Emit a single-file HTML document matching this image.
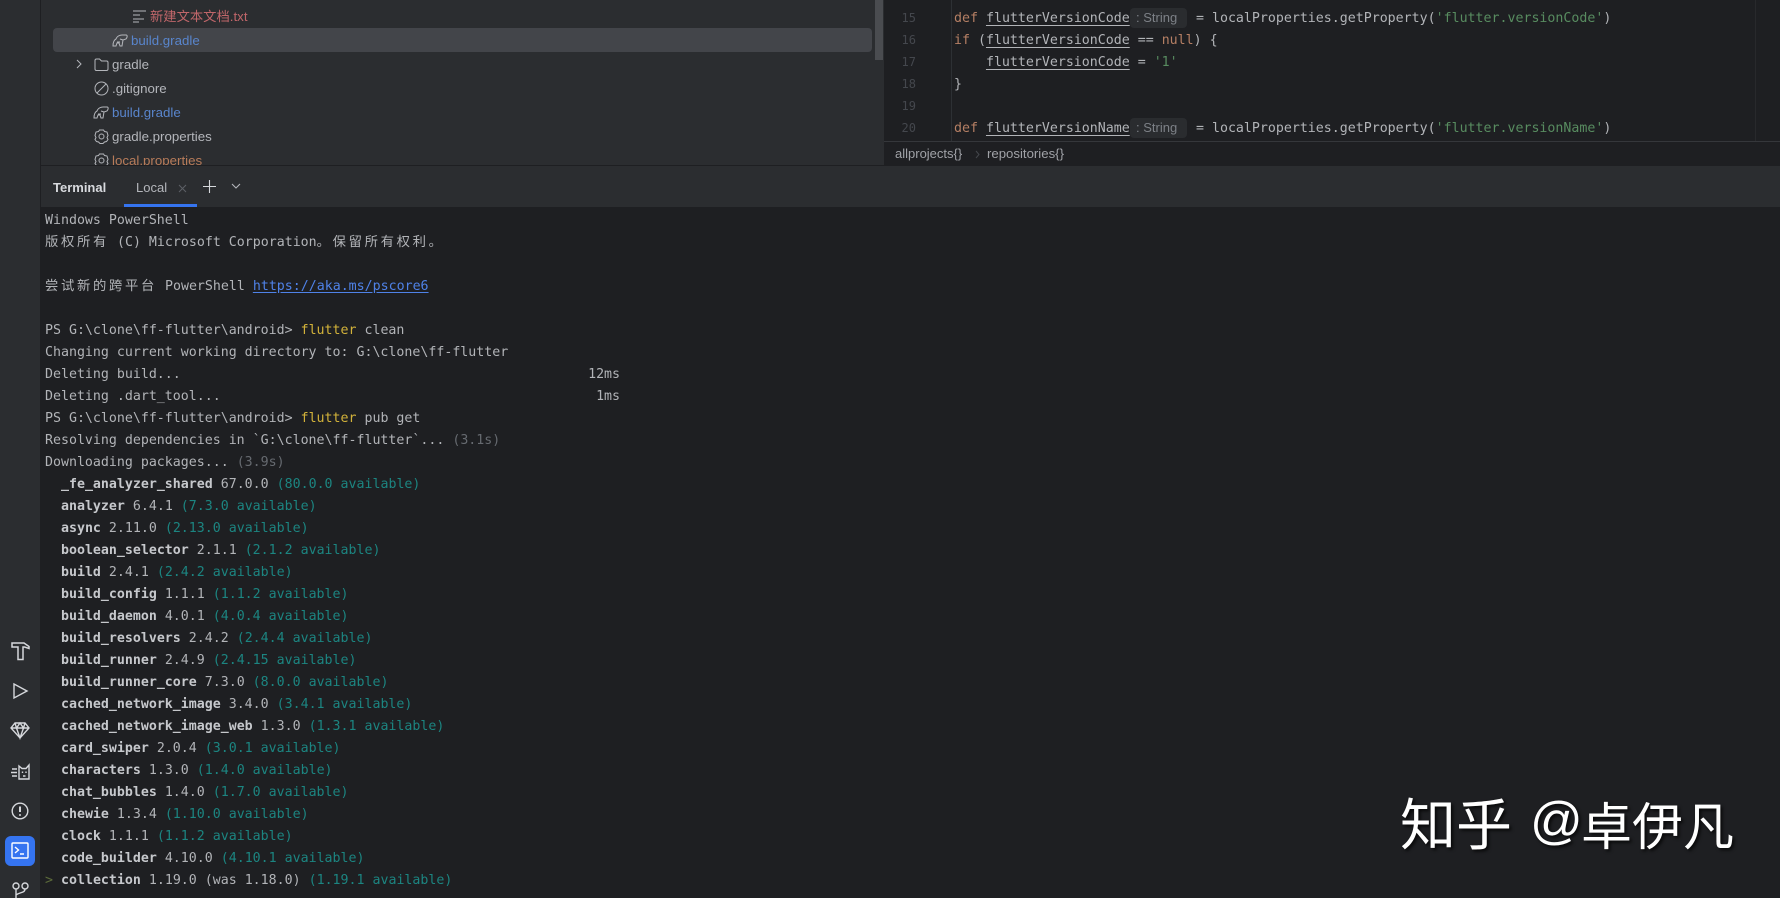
<!DOCTYPE html>
<html><head><meta charset="utf-8"><style>
html,body{margin:0;padding:0;background:#1e1f22;}
#p{position:relative;width:1780px;height:898px;overflow:hidden;background:#1e1f22;}
.a{position:absolute;}
.t{position:absolute;font:13.3px/24px "Liberation Sans","Noto Sans CJK SC",sans-serif;white-space:pre;color:#b4b6bb;}
.m{position:absolute;left:45px;height:22px;font:13.28px/22px "DejaVu Sans Mono","Noto Sans CJK SC",monospace;white-space:pre;color:#b2b4b8;transform:translateY(2px);}
.m.j{transform:none;}
.m b{font-weight:700;color:#c6c8cc;}
.c{font-family:"Noto Sans CJK SC",sans-serif;font-size:13.33px;letter-spacing:2.67px;}
.g{color:#1c8581;}.y{color:#d2b23a;}.d{color:#666a70;}
.l{color:#4f82e8;text-decoration:underline;text-underline-offset:2px;}
.e{position:absolute;left:954px;height:22px;font:13.28px/22px "DejaVu Sans Mono",monospace;white-space:pre;color:#b2b4b8;transform:translateY(1px);}
.n{position:absolute;left:896px;width:20px;text-align:right;font:12px/22px "DejaVu Sans Mono",monospace;color:#44474d;}
.k{color:#b57f64;}.s{color:#588c60;}
.u{text-decoration:underline;text-underline-offset:3px;}
.h{position:absolute;left:1130px;width:57px;height:20px;background:#2a2c2f;border-radius:4px;font:13px/20px "Liberation Sans",sans-serif;color:#7d8187;text-indent:6px;white-space:pre;}
svg{position:absolute;overflow:visible;fill:none;stroke:#b4b6bb;}
.b svg,svg.b{stroke:#d6d8dc;}
.w{position:absolute;color:#fff;font-family:"Noto Sans CJK SC",sans-serif;text-shadow:2px 2px 3px rgba(0,0,0,.75);white-space:pre;}
</style></head><body><div id="p">

<!-- top panes -->
<div class="a" style="left:0;top:0;width:884px;height:166px;background:#2b2d30;"></div>
<div class="a" style="left:53px;top:28px;width:819px;height:24px;background:#43454a;border-radius:4px;"></div>
<div class="a" style="left:875px;top:0;width:8px;height:60px;background:#4a4c50;"></div>
<div class="t" style="left:150px;top:5px;color:#c0666a;">新建文本文档.txt</div>
<div class="t" style="left:131px;top:29px;color:#5985cc;">build.gradle</div>
<div class="t" style="left:112px;top:53px;">gradle</div>
<div class="t" style="left:112px;top:77px;">.gitignore</div>
<div class="t" style="left:112px;top:101px;color:#5985cc;">build.gradle</div>
<div class="t" style="left:112px;top:125px;">gradle.properties</div>
<div class="a" style="left:40px;top:149px;width:840px;height:16px;overflow:hidden;"><div class="t" style="left:72px;top:0;color:#b87c5a;">local.properties</div></div>

<!-- tree icons -->
<svg style="left:133px;top:10px" width="14" height="13" stroke-width="1"><path d="M0 1h13M0 5h7M0 9h11M0 12h6"/></svg>
<svg style="left:112px;top:33px" width="16" height="14" stroke-width="1"><path d="M1 13c0-3 1-6 3-7 1-3 4-4 6-4h4c2 0 1 3 0 4l-3 1-1 6H8l-1-3H5l-1 3zM8 6l3 1M5 9h3"/></svg>
<svg style="left:76px;top:59px" width="6" height="10" stroke-width="1"><path d="M1 1l4 4-4 4"/></svg>
<svg style="left:94px;top:58px" width="15" height="13" stroke-width="1"><path d="M1 11V2.500Q1 1 2.500 1H5.500L7.500 3H12.500Q14 3 14 4.500V11Q14 12.500 12.500 12.500H2.500Q1 12.500 1 11Z"/></svg>
<svg style="left:94px;top:81px" width="15" height="15" stroke-width="1"><circle cx="7.500" cy="7.500" r="6.500"/><path d="M3 12L12 3"/></svg>
<svg style="left:93px;top:105px" width="16" height="14" stroke-width="1"><path d="M1 13c0-3 1-6 3-7 1-3 4-4 6-4h4c2 0 1 3 0 4l-3 1-1 6H8l-1-3H5l-1 3zM8 6l3 1M5 9h3"/></svg>
<svg style="left:94px;top:129px" width="15" height="15" stroke-width="1"><path d="M5.500 1H9.500L10.500 2.500L13 3L14 6.500L13 8.500L14 10.500L12.500 12.500L10.500 13L9 14.500H6L4.500 13L2.500 12.500L1 10.500L2 8.500L1 6.500L2 3L4.500 2.500Z"/><circle cx="7.500" cy="7.500" r="2.500"/></svg>
<div class="a" style="left:90px;top:150px;width:22px;height:15px;overflow:hidden;"><svg style="left:4px;top:3px" width="15" height="15" stroke-width="1"><path d="M5.500 1H9.500L10.500 2.500L13 3L14 6.500L13 8.500L14 10.500L12.500 12.500L10.500 13L9 14.500H6L4.500 13L2.500 12.500L1 10.500L2 8.500L1 6.500L2 3L4.500 2.500Z"/><circle cx="7.500" cy="7.500" r="2.500"/></svg></div>

<!-- editor -->
<div class="a" style="left:884px;top:0;width:896px;height:166px;background:#1e1f22;"></div>
<div class="a" style="left:951px;top:0;width:1px;height:141px;background:#2d3034;"></div>
<div class="a" style="left:1755px;top:0;width:1px;height:141px;background:#28292c;"></div>
<div class="a" style="left:884px;top:141px;width:896px;height:1px;background:#35373b;"></div>
<div class="n" style="top:7px">15</div><div class="n" style="top:29px">16</div><div class="n" style="top:51px">17</div><div class="n" style="top:73px">18</div><div class="n" style="top:95px">19</div><div class="n" style="top:117px">20</div>
<div class="h" style="top:8px">: String</div>
<div class="h" style="top:118px">: String</div>
<div class="e" style="top:7px"><span class="k">def</span> <span class="u">flutterVersionCode</span></div>
<div class="e" style="top:7px;left:1196px">= localProperties.getProperty(<span class="s">'flutter.versionCode'</span>)</div>
<div class="e" style="top:29px"><span class="k">if</span> (<span class="u">flutterVersionCode</span> == <span class="k">null</span>) {</div>
<div class="e" style="top:51px">    <span class="u">flutterVersionCode</span> = <span class="s">'1'</span></div>
<div class="e" style="top:73px">}</div>
<div class="e" style="top:117px"><span class="k">def</span> <span class="u">flutterVersionName</span></div>
<div class="e" style="top:117px;left:1196px">= localProperties.getProperty(<span class="s">'flutter.versionName'</span>)</div>
<div class="t" style="left:895px;top:142px;color:#a0a2a7;font-size:13px;">allprojects{}</div>
<svg style="left:975px;top:150px;stroke:#44474c" width="6" height="9" stroke-width="1"><path d="M1 1l3 3.500-3 3.500"/></svg>
<div class="t" style="left:987px;top:142px;color:#a0a2a7;font-size:13.2px;">repositories{}</div>

<!-- terminal header -->
<div class="a" style="left:0;top:165px;width:1780px;height:1px;background:#1e1f22;"></div>
<div class="a" style="left:0;top:166px;width:1780px;height:41px;background:#2b2d30;"></div>
<div class="t" style="left:53px;top:176px;font-size:13px;font-weight:700;color:#d8dade;">Terminal</div>
<div class="t" style="left:136px;top:176px;font-size:13px;color:#b4b6bb;">Local</div>
<svg style="left:178px;top:184px;stroke:#5d6066" width="9" height="9" stroke-width="1"><path d="M1 1l7 7M8 1l-7 7"/></svg>
<svg class="b" style="left:203px;top:180px" width="13" height="13" stroke-width="1.1"><path d="M6.500 0V13M0 6.500H13"/></svg>
<svg style="left:231px;top:183px" width="10" height="7" stroke-width="1.1"><path d="M1 1l4 4 4-4"/></svg>
<div class="a" style="left:124px;top:204px;width:73px;height:3px;background:#3574f0;"></div>

<!-- sidebar -->
<div class="a" style="left:0;top:0;width:40px;height:898px;background:#2b2d30;"></div>
<div class="a" style="left:40px;top:0;width:1px;height:207px;background:#1e1f22;"></div>
<svg class="b" style="left:11px;top:642px" width="18" height="18" stroke-width="1.5"><path d="M1 1H13L18 4.500V6.500L13.500 5H12V17.500H7V5H1Z"/></svg>
<svg class="b" style="left:13px;top:683px" width="15" height="16" stroke-width="1.4"><path d="M1 1L14 8L1 15Z"/></svg>
<svg class="b" style="left:10px;top:722px" width="20" height="17" stroke-width="1.4"><path d="M5 1H15L19 6L10 16L1 6ZM1 6H19M6.500 6L10 16L13.500 6M5 1L6.500 6L10 1L13.500 6L15 1"/></svg>
<svg class="b" style="left:11px;top:764px" width="19" height="16" stroke-width="1.4"><path d="M8 2L11 4.500H15L18 1V15H8ZM1 5H6M0 8.500H6M1 12H6"/><path d="M11.500 7.500v1.500M15 7.500v1.500M12 12h2.500" stroke-width="1.4"/></svg>
<svg class="b" style="left:11px;top:802px" width="18" height="18" stroke-width="1.4"><circle cx="9" cy="9" r="7.800"/><path d="M9 4.500V10M9 12.200V13.800" stroke-width="2"/></svg>
<div class="a" style="left:5px;top:836px;width:30px;height:30px;background:#3574f0;border-radius:6px;"></div>
<svg style="left:11px;top:842px;stroke:#fff" width="18" height="17" stroke-width="1.4"><rect x="1" y="1" width="16" height="15" rx="1"/><path d="M4 5L7.500 8L4 11M9 12H13"/></svg>
<svg class="b" style="left:12px;top:882px" width="17" height="16" stroke-width="1.4"><circle cx="4" cy="4" r="3"/><circle cx="13" cy="4" r="3"/><path d="M4 7V16M13 7C13 11 8 10 4 13"/></svg>

<!-- terminal -->
<div class="m" style="top:208px">Windows PowerShell</div>
<div class="m j" style="top:230px"><span class="c">版权所有</span> (C) Microsoft Corporation<span class="c">。保留所有权利。</span></div>
<div class="m j" style="top:274px"><span class="c">尝试新的跨平台</span> PowerShell <span class="l">https://aka.ms/pscore6</span></div>
<div class="m" style="top:318px">PS G:\clone\ff-flutter\android&gt; <span class="y">flutter</span> clean</div>
<div class="m" style="top:340px">Changing current working directory to: G:\clone\ff-flutter</div>
<div class="m" style="top:362px">Deleting build...                                                   12ms</div>
<div class="m" style="top:384px">Deleting .dart_tool...                                               1ms</div>
<div class="m" style="top:406px">PS G:\clone\ff-flutter\android&gt; <span class="y">flutter</span> pub get</div>
<div class="m" style="top:428px">Resolving dependencies in `G:\clone\ff-flutter`... <span class="d">(3.1s)</span></div>
<div class="m" style="top:450px">Downloading packages... <span class="d">(3.9s)</span></div>
<div class="m" style="top:472px">  <b>_fe_analyzer_shared</b> 67.0.0 <span class="g">(80.0.0 available)</span></div>
<div class="m" style="top:494px">  <b>analyzer</b> 6.4.1 <span class="g">(7.3.0 available)</span></div>
<div class="m" style="top:516px">  <b>async</b> 2.11.0 <span class="g">(2.13.0 available)</span></div>
<div class="m" style="top:538px">  <b>boolean_selector</b> 2.1.1 <span class="g">(2.1.2 available)</span></div>
<div class="m" style="top:560px">  <b>build</b> 2.4.1 <span class="g">(2.4.2 available)</span></div>
<div class="m" style="top:582px">  <b>build_config</b> 1.1.1 <span class="g">(1.1.2 available)</span></div>
<div class="m" style="top:604px">  <b>build_daemon</b> 4.0.1 <span class="g">(4.0.4 available)</span></div>
<div class="m" style="top:626px">  <b>build_resolvers</b> 2.4.2 <span class="g">(2.4.4 available)</span></div>
<div class="m" style="top:648px">  <b>build_runner</b> 2.4.9 <span class="g">(2.4.15 available)</span></div>
<div class="m" style="top:670px">  <b>build_runner_core</b> 7.3.0 <span class="g">(8.0.0 available)</span></div>
<div class="m" style="top:692px">  <b>cached_network_image</b> 3.4.0 <span class="g">(3.4.1 available)</span></div>
<div class="m" style="top:714px">  <b>cached_network_image_web</b> 1.3.0 <span class="g">(1.3.1 available)</span></div>
<div class="m" style="top:736px">  <b>card_swiper</b> 2.0.4 <span class="g">(3.0.1 available)</span></div>
<div class="m" style="top:758px">  <b>characters</b> 1.3.0 <span class="g">(1.4.0 available)</span></div>
<div class="m" style="top:780px">  <b>chat_bubbles</b> 1.4.0 <span class="g">(1.7.0 available)</span></div>
<div class="m" style="top:802px">  <b>chewie</b> 1.3.4 <span class="g">(1.10.0 available)</span></div>
<div class="m" style="top:824px">  <b>clock</b> 1.1.1 <span class="g">(1.1.2 available)</span></div>
<div class="m" style="top:846px">  <b>code_builder</b> 4.10.0 <span class="g">(4.10.1 available)</span></div>
<div class="m" style="top:868px"><span style="color:#5c6b3a">&gt;</span> <b>collection</b> 1.19.0 (was 1.18.0) <span class="g">(1.19.1 available)</span></div>

<!-- watermark -->
<div class="w" style="left:1400px;top:784px;font-size:56px;line-height:76px;font-weight:400;">知乎</div>
<div class="w" style="left:1530px;top:786px;font-size:52px;line-height:70px;font-family:'Liberation Sans',sans-serif;">@</div>
<div class="w" style="left:1581px;top:786px;font-size:51px;line-height:74px;font-weight:400;">卓伊凡</div>
</div></body></html>
